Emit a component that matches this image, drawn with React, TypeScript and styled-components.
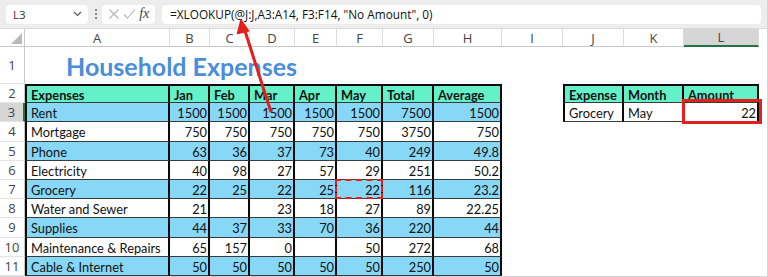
import React from "react";
import styled, { createGlobalStyle, css } from "styled-components";

const GlobalStyle = createGlobalStyle`
  html, body { margin: 0; padding: 0; background: #ffffff; }
  body { overflow: hidden; }
  * { box-sizing: border-box; }
`;

const CELL_FONT = `"Lato", "Liberation Sans", sans-serif`;
const UI_FONT = `"Open Sans", "Noto Sans", sans-serif`;

const Frame = styled.div`
  position: relative;
  width: 768px;
  height: 277px;
  overflow: hidden;
  background: #ffffff;
  border-right: 1px solid #d4d4d4;
  border-bottom: 1px solid #d4d4d4;
`;

const FormulaBar = styled.div`
  height: 29px;
  display: flex;
  align-items: center;
  padding: 0 6px;
  background: #ededed;
  border-bottom: 1px solid #dadada;
  font-family: ${UI_FONT};
  font-size: 12px;
  color: #222;
`;

const Box = styled.div<{ $w?: number; $grow?: boolean }>`
  height: 19px;
  background: #ffffff;
  border-radius: 4px;
  display: flex;
  align-items: center;
  ${(p) => (p.$w ? `width: ${p.$w}px;` : "")}
  ${(p) => (p.$grow ? "flex: 1;" : "")}
`;

const NameBox = styled(Box)`
  justify-content: space-between;
  padding: 0 6px 0 7px;
  color: #333;
  font-size: 11.5px;
`;

const Dots = styled.div`
  width: 7px;
  margin: 0 3px 0 4px;
  display: flex;
  flex-direction: column;
  align-items: center;
  gap: 2px;
  span {
    width: 2px;
    height: 2px;
    border-radius: 1px;
    background: #666;
  }
`;

const FxBox = styled(Box)`
  justify-content: space-around;
  padding: 0 4px;
  margin-right: 7px;
`;

const FxText = styled.span`
  font-family: "Liberation Serif", "DejaVu Serif", serif;
  font-style: italic;
  font-size: 14px;
  color: #444;
`;

const FormulaText = styled(Box)`
  padding-left: 8px;
  font-size: 11.8px;
  color: #111;
  white-space: nowrap;
`;

const Sheet = styled.div`
  display: grid;
  grid-template-columns: 25px 145px 40px 40px 45px 42px 46px 51px 68px 61px 61px 60px 75px 1fr;
  grid-template-rows: 18px 37px repeat(10, 19.2px);
`;

const ColHead = styled.div<{ $active?: boolean }>`
  display: flex;
  align-items: center;
  justify-content: center;
  font-family: ${UI_FONT};
  font-size: 13px;
  color: #444;
  background: ${(p) => (p.$active ? "#d6d6d6" : "#ffffff")};
  border-right: 1px solid #dcdcdc;
  border-bottom: ${(p) => (p.$active ? "2px solid #217346" : "1px solid #c8c8c8")};
`;

const Corner = styled.div`
  background: #ffffff;
  border-right: 1px solid #c8c8c8;
  border-bottom: 1px solid #c8c8c8;
  display: flex;
  align-items: flex-end;
  justify-content: flex-end;
  padding: 0 2px 2px 0;
`;

const RowHead = styled.div<{ $active?: boolean; $tall?: boolean }>`
  display: flex;
  align-items: ${(p) => (p.$tall ? "flex-end" : "center")};
  justify-content: center;
  padding-bottom: ${(p) => (p.$tall ? "9px" : "0")};
  font-family: ${UI_FONT};
  font-size: 13px;
  color: #444;
  background: ${(p) => (p.$active ? "#d6d6d6" : "#ffffff")};
  border-right: ${(p) => (p.$active ? "2px solid #217346" : "1px solid #c8c8c8")};
  border-bottom: 1px solid #e4e4e4;
`;

const TitleCell = styled.div`
  grid-column: 2 / span 8;
  display: flex;
  align-items: center;
  padding-left: 41px;
  padding-top: 1px;
  font-family: ${CELL_FONT};
  font-weight: 700;
  font-size: 25px;
  color: #4a8ddb;
`;

const Blank = styled.div<{ $span?: number }>`
  ${(p) => (p.$span ? `grid-column: span ${p.$span};` : "")}
`;

type Tone = "head" | "blue" | "white";

const tones: Record<Tone, string> = {
  head: "#64f1ca",
  blue: "#87d7f7",
  white: "#ffffff",
};

const Cell = styled.div<{
  $tone: Tone;
  $num?: boolean;
  $first?: boolean;
  $top?: boolean;
  $mark?: "solid" | "dashed";
}>`
  position: relative;
  display: flex;
  align-items: center;
  justify-content: ${(p) => (p.$num ? "flex-end" : "flex-start")};
  padding: ${(p) => (p.$num ? "2px 1px 0 2px" : "2px 2px 0 4px")};
  font-family: ${CELL_FONT};
  font-size: 12.8px;
  font-weight: ${(p) => (p.$tone === "head" ? 700 : 400)};
  color: #111;
  white-space: nowrap;
  background: ${(p) => tones[p.$tone]};
  border-right: 2px solid #0a0a0a;
  border-bottom: 1px solid #3a3a3a;
  ${(p) => (p.$first ? "border-left: 2px solid #0a0a0a;" : "")}
  ${(p) => (p.$top ? "border-top: 2px solid #0a0a0a;" : "")}
  ${(p) =>
    p.$mark === "solid" &&
    css`
      &::after {
        content: "";
        position: absolute;
        left: -2px;
        right: -5px;
        top: -4px;
        bottom: -3px;
        border: 3px solid #e3201b;
      }
    `}
  ${(p) =>
    p.$mark === "dashed" &&
    css`
      &::after {
        content: "";
        position: absolute;
        left: -2px;
        right: -2px;
        top: -1px;
        bottom: -1px;
        border: 2px dashed #e3201b;
      }
    `}
`;

const Arrow = styled.svg`
  position: absolute;
  left: 0;
  top: 0;
  pointer-events: none;
`;

const header = ["Expenses", "Jan", "Feb", "Mar", "Apr", "May", "Total", "Average"];

const rows: (string | number)[][] = [
  ["Rent", 1500, 1500, 1500, 1500, 1500, 7500, 1500],
  ["Mortgage", 750, 750, 750, 750, 750, 3750, 750],
  ["Phone", 63, 36, 37, 73, 40, 249, 49.8],
  ["Electricity", 40, 98, 27, 57, 29, 251, 50.2],
  ["Grocery", 22, 25, 22, 25, 22, 116, 23.2],
  ["Water and Sewer", 21, "", 23, 18, 27, 89, 22.25],
  ["Supplies", 44, 37, 33, 70, 36, 220, 44],
  ["Maintenance & Repairs", 65, 157, 0, "", 50, 272, 68],
  ["Cable & Internet", 50, 50, 50, 50, 50, 250, 50],
];

const letters = ["A", "B", "C", "D", "E", "F", "G", "H", "I", "J", "K", "L"];

export default function App() {
  return (
    <>
      <GlobalStyle />
      <Frame>
        <FormulaBar>
          <NameBox $w={82}>
            <span>L3</span>
            <svg width="9" height="6" viewBox="0 0 9 6">
              <path d="M1 1 L4.5 4.5 L8 1" fill="none" stroke="#555" strokeWidth="1.2" />
            </svg>
          </NameBox>
          <Dots>
            <span />
            <span />
            <span />
          </Dots>
          <FxBox $w={53}>
            <svg width="12" height="12" viewBox="0 0 12 12">
              <path d="M1.5 1.5 L10.5 10.5 M10.5 1.5 L1.5 10.5" stroke="#b5b5b5" strokeWidth="1.1" />
            </svg>
            <svg width="13" height="12" viewBox="0 0 13 12">
              <path d="M1 6.5 L4.5 10 L12 1.5" fill="none" stroke="#b5b5b5" strokeWidth="1.1" />
            </svg>
            <FxText>fx</FxText>
          </FxBox>
          <FormulaText $grow>=XLOOKUP(@J:J,A3:A14, F3:F14, "No Amount", 0)</FormulaText>
        </FormulaBar>
        <Sheet>
          <Corner>
            <svg width="11" height="11" viewBox="0 0 11 11">
              <path d="M11 0 L11 11 L0 11 Z" fill="#b9b9b9" />
            </svg>
          </Corner>
          {letters.map((l) => (
            <ColHead key={l} $active={l === "L"}>
              {l}
            </ColHead>
          ))}
          <Blank />

          <RowHead $tall>1</RowHead>
          <TitleCell>Household Expenses</TitleCell>
          <Blank $span={5} />

          <RowHead>2</RowHead>
          {header.map((h, i) => (
            <Cell key={h} $tone="head" $first={i === 0} $top>
              {h}
            </Cell>
          ))}
          <Blank />
          <Cell $tone="head" $first $top>
            Expense
          </Cell>
          <Cell $tone="head" $top>
            Month
          </Cell>
          <Cell $tone="head" $top>
            Amount
          </Cell>
          <Blank />

          {rows.map((r, ri) => {
            const rowNo = ri + 3;
            const tone: Tone = ri % 2 === 0 ? "blue" : "white";
            return (
              <React.Fragment key={rowNo}>
                <RowHead $active={rowNo === 3}>{rowNo}</RowHead>
                {r.map((v, ci) => (
                  <Cell
                    key={ci}
                    $tone={tone}
                    $num={ci > 0}
                    $first={ci === 0}
                    $mark={rowNo === 7 && ci === 5 ? "dashed" : undefined}
                  >
                    {v}
                  </Cell>
                ))}
                <Blank />
                {rowNo === 3 ? (
                  <>
                    <Cell $tone="white" $first>
                      Grocery
                    </Cell>
                    <Cell $tone="white">May</Cell>
                    <Cell $tone="white" $num $mark="solid">
                      22
                    </Cell>
                  </>
                ) : (
                  <Blank $span={3} />
                )}
                <Blank />
              </React.Fragment>
            );
          })}
        </Sheet>
        <Arrow width="768" height="277" viewBox="0 0 768 277">
          <line x1="271" y1="112" x2="245" y2="31" stroke="#e3201b" strokeWidth="3" />
          <path d="M241 20 L237.5 33.5 L248.5 31 Z" fill="#e3201b" stroke="#e3201b" strokeWidth="1.5" strokeLinejoin="round" />
        </Arrow>
      </Frame>
    </>
  );
}
